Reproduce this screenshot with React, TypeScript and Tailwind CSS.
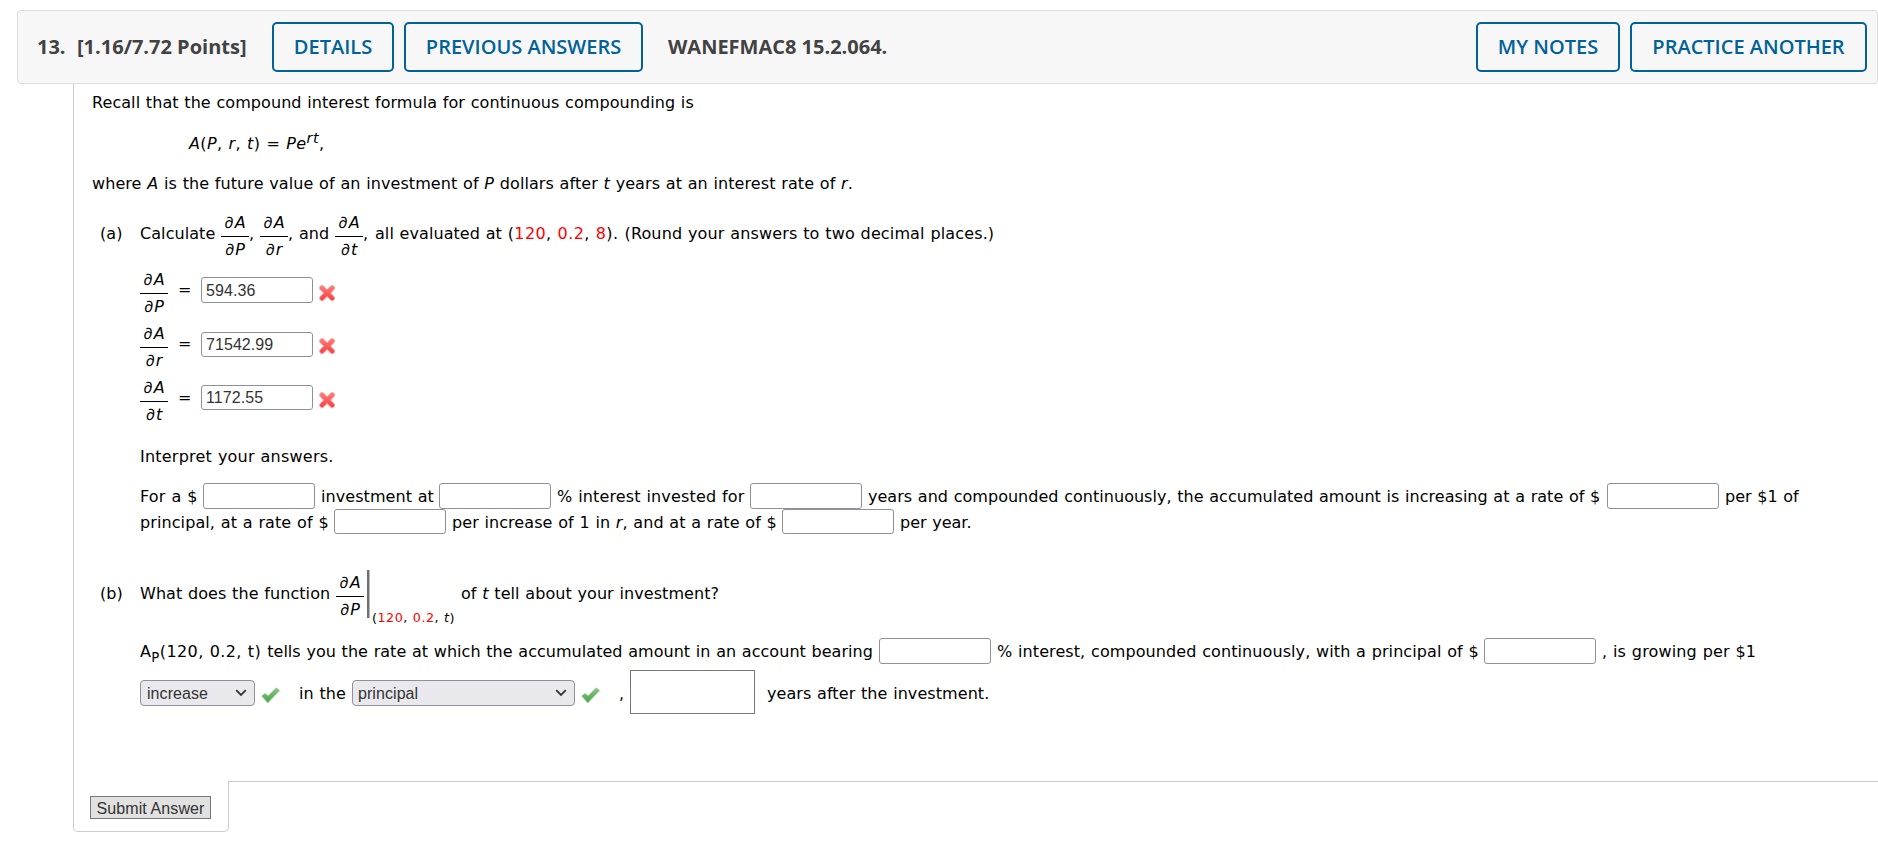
import React from 'react';

const Field = ({ value = '', className = 'h-[26px]' }: { value?: string; className?: string }) => (
  <input
    defaultValue={value}
    className={`w-[112px] shrink-0 rounded-[3px] border border-[#8f8f9d] bg-white px-[4px] pt-px font-['Liberation_Sans',sans-serif] text-[16px] text-[#333] outline-none ${className}`}
  />
);

const Partial = ({ of }: { of: string }) => (
  <span className="flex h-[20px] items-baseline">
    <span className="mr-px font-['Open_Sans',sans-serif]">∂</span>
    <span>{of}</span>
  </span>
);

const Frac = ({ bottom, className = 'mt-[3px]' }: { bottom: string; className?: string }) => (
  <span className={`flex w-[28px] shrink-0 flex-col items-center leading-[20px] italic ${className}`}>
    <Partial of="A" />
    <span className="mt-[4px] mb-[2px] h-px w-full bg-black" />
    <Partial of={bottom} />
  </span>
);

const Wrong = ({ className }: { className: string }) => (
  <svg width="18" height="18" viewBox="0 0 18 18" className={`ml-[5px] shrink-0 ${className}`} fill="none" strokeLinecap="round">
    <defs>
      <linearGradient id="wrongFill" gradientUnits="userSpaceOnUse" x1="0" y1="1" x2="0" y2="17">
        <stop offset="0" stopColor="#ff7f7f" />
        <stop offset="1" stopColor="#f53d3d" />
      </linearGradient>
    </defs>
    <path d="M4 4 14.2 14.2M14.2 4 4 14.2" stroke="#fba3a3" strokeWidth="5.6" />
    <path d="M4 4 14.2 14.2M14.2 4 4 14.2" stroke="url(#wrongFill)" strokeWidth="4" />
  </svg>
);

const Right = () => (
  <svg width="19" height="17" viewBox="0 0 19 17" className="mt-[6px] ml-[6px] shrink-0">
    <defs>
      <linearGradient id="rightFill" x1="0" y1="0" x2="0" y2="1">
        <stop offset="0" stopColor="#8bcb80" />
        <stop offset="1" stopColor="#45a049" />
      </linearGradient>
    </defs>
    <path d="M.9 9 4 6.6 7.2 9 15.2 1 18.4 3.4 6.8 15.8Z" fill="url(#rightFill)" stroke="#7fc47a" strokeWidth=".8" strokeLinejoin="round" />
  </svg>
);

const Select = ({ value, className }: { value: string; className: string }) => (
  <button className={`mt-[2px] flex h-[26px] shrink-0 items-center justify-between rounded-[4px] border border-[#8f8f9d] bg-[#e9e9ed] pr-[7px] font-['Liberation_Sans',sans-serif] text-[16px] text-[#333] ${className}`}>
    <span className="pt-px">{value}</span>
    <svg width="12" height="8" viewBox="0 0 12 8" fill="none" stroke="#333" strokeWidth="1.8">
      <path d="M1.2 1.2 6 6 10.8 1.2" />
    </svg>
  </button>
);

const HeaderButton = ({ label, className }: { label: string; className: string }) => (
  <button className={`h-[50px] shrink-0 rounded-[5px] border-2 border-[#006298] text-center font-semibold whitespace-nowrap text-[#006298] ${className}`}>
    {label}
  </button>
);

const partials = [
  { bottom: 'P', value: '594.36', row: 'h-[54px]', field: 'h-[26px]', mark: 'mt-[6px]' },
  { bottom: 'r', value: '71542.99', row: 'h-[54px]', field: 'h-[25px]', mark: 'mt-[4px]' },
  { bottom: 't', value: '1172.55', row: 'h-[53px]', field: 'h-[25px]', mark: 'mt-[5px]' },
];

export default function App() {
  return (
    <div className="h-[844px] w-[1878px] overflow-hidden bg-white pt-[10px] pl-[17px] font-['DejaVu_Sans',Verdana,sans-serif] text-[16px] leading-[20px] tracking-[0.07px] whitespace-nowrap text-black [word-spacing:0.54px]">
      {/* question header */}
      <header className="flex h-[74px] items-center rounded-[4px] border border-[#dcdcdc] bg-[#f7f7f7] pr-[10px] pl-[19px] font-['Open_Sans',sans-serif] text-[20px] font-bold tracking-normal text-[#424242] [word-spacing:0]">
        <span className="w-[40px] shrink-0">13.</span>
        <span className="w-[195px] shrink-0">[1.16/7.72 Points]</span>
        <HeaderButton label="DETAILS" className="w-[122px]" />
        <HeaderButton label="PREVIOUS ANSWERS" className="ml-[10px] w-[239px]" />
        <span className="ml-[25px]">WANEFMAC8 15.2.064.</span>
        <HeaderButton label="MY NOTES" className="ml-auto w-[144px]" />
        <HeaderButton label="PRACTICE ANOTHER" className="ml-[10px] w-[237px]" />
      </header>

      {/* question body */}
      <main className="ml-[56px] h-[697px] border-l border-[#ccc] pt-[9px] pl-[18px]">
        <p className="h-[20px]">Recall that the compound interest formula for continuous compounding is</p>
        <p className="mt-[21px] h-[20px] pl-[97px] tracking-[0.4px]">
          <i>A</i>(<i>P</i>, <i>r</i>, <i>t</i>) = <i>Pe</i>
          <i className="relative top-[-6px] text-[14.4px]">rt</i>,
        </p>
        <p className="mt-[20px] h-[20px] tracking-[0.08px]">
          where <i>A</i> is the future value of an investment of <i>P</i> dollars after <i>t</i> years at an interest rate of <i>r</i>.
        </p>

        <div className="mt-[12px] flex h-[56px] items-center pl-[8px]">
          <span className="w-[40px]">(a)</span>
          <span className="w-[81px]">Calculate</span>
          <Frac bottom="P" />
          <span className="w-[11px]">,</span>
          <Frac bottom="r" />
          <span className="w-[11px]">,</span>
          <span className="w-[36px]">and</span>
          <Frac bottom="t" />
          <span className="w-[12px]">,</span>
          <span>
            all evaluated at{' '}
            <span className="tracking-[0.4px]">
              (<span className="text-[#f00]">120</span>, <span className="text-[#f00]">0.2</span>, <span className="text-[#f00]">8</span>).{' '}
            </span>
            <span className="tracking-[0.14px]">(Round your answers to two decimal places.)</span>
          </span>
        </div>

        <div className="mt-px pl-[48px]">
          {partials.map(p => (
            <div key={p.bottom} className={`flex items-center ${p.row}`}>
              <Frac bottom={p.bottom} className="mt-[5px]" />
              <span className="w-[33px] pl-[10px]">=</span>
              <Field value={p.value} className={p.field} />
              <Wrong className={p.mark} />
            </div>
          ))}
          <p className="mt-[23px] h-[20px] tracking-[0.22px]">Interpret your answers.</p>
          <div className="mt-[16px] flex h-[26px] items-center [&>span]:pt-[2px]">
            <span className="w-[63px] tracking-[0.2px]">For a $</span>
            <Field />
            <span className="w-[124px] pl-[6px]">investment at</span>
            <Field />
            <span className="w-[199px] pl-[6px] tracking-[0.15px]">% interest invested for</span>
            <Field />
            <span className="w-[745px] pl-[6px] tracking-[0.03px]">years and compounded continuously, the accumulated amount is increasing at a rate of $</span>
            <Field />
            <span className="pl-[6px] tracking-normal">per $1 of</span>
          </div>
          <div className="flex h-[25px] items-center [&>span]:pt-[2px]">
            <span className="w-[194px] tracking-[0.1px]">principal, at a rate of $</span>
            <Field className="h-[25px]" />
            <span className="w-[336px] pl-[6px]">per increase of 1 in <i>r</i>, and at a rate of $</span>
            <Field className="h-[25px]" />
            <span className="pl-[6px] tracking-normal">per year.</span>
          </div>
        </div>

        <div className="mt-[32px] flex h-[56px] items-center pl-[8px]">
          <span className="w-[40px]">(b)</span>
          <span className="w-[196px]">What does the function</span>
          <Frac bottom="P" />
          <span className="ml-[3px] h-[48px] w-[3px] border-r border-[#bbb] bg-[#707070]" />
          <span className="mt-[48px] w-[91px] pl-[2px] text-[12.8px] tracking-[0.45px]">
            (<span className="text-[#f00]">120</span>, <span className="text-[#f00]">0.2</span>, <i>t</i>)
          </span>
          <span>of <i>t</i> tell about your investment?</span>
        </div>

        <div className="mt-[16px] flex h-[26px] items-center pl-[48px] [&>span]:pt-[2px]">
          <span className="w-[739px] tracking-[0.04px]">
            <span className="tracking-[0.4px]">
              A<span className="relative top-[5px] text-[13.3px]">P</span>(120, 0.2, t){' '}
            </span>
            tells you the rate at which the accumulated amount in an account bearing
          </span>
          <Field />
          <span className="w-[493px] pl-[6px] tracking-[0.09px]">% interest, compounded continuously, with a principal of $</span>
          <Field />
          <span className="pl-[6px] tracking-[0.15px]">, is growing per $1</span>
        </div>
        <div className="mt-[6px] flex h-[44px] items-center pl-[48px] [&>span]:pt-[3px]">
          <Select value="increase" className="w-[115px] pl-[6px]" />
          <Right />
          <span className="w-[72px] pl-[19px]">in the</span>
          <Select value="principal" className="w-[223px] pl-[5px]" />
          <Right />
          <span className="w-[30px] pl-[19px]">,</span>
          <input className="h-[44px] w-[125px] border border-[#767676] outline-none" />
          <span className="pl-[12px]">years after the investment.</span>
        </div>
      </main>

      {/* submit tab */}
      <footer className="ml-[56px] flex h-[51px]">
        <div className="h-[51px] w-[156px] rounded-b-[5px] border-r border-b border-l border-[#ccc] pt-[15px] pl-[16px]">
          <button className="h-[23px] w-[121px] border border-[#767676] bg-[#e1e1e1] pt-[2px] font-['Liberation_Sans',sans-serif] text-[16px] leading-[20px] tracking-[0.1px] text-[#333]">
            Submit Answer
          </button>
        </div>
        <div className="flex-1 border-t border-[#ccc]" />
      </footer>
    </div>
  );
}
